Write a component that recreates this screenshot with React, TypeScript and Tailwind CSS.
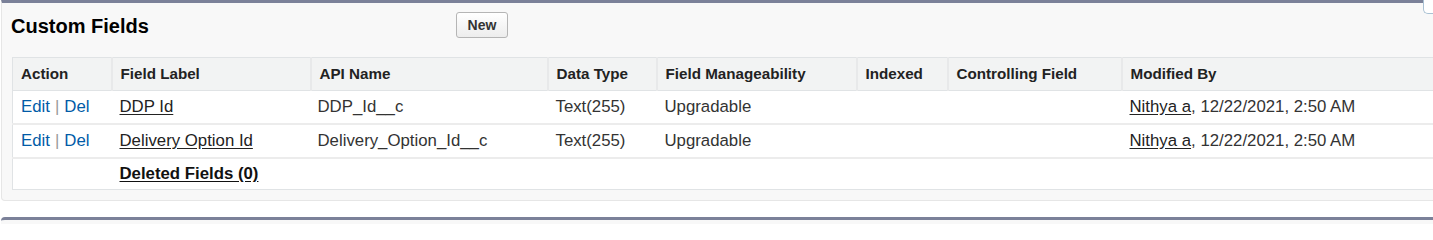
import React from 'react';

type Field = {
  label: string;
  api: string;
  type: string;
  manage: string;
};

const fields: Field[] = [
  { label: 'DDP Id', api: 'DDP_Id__c', type: 'Text(255)', manage: 'Upgradable' },
  { label: 'Delivery Option Id', api: 'Delivery_Option_Id__c', type: 'Text(255)', manage: 'Upgradable' },
];

const cols = [
  { title: 'Action', w: 'w-[99px]' },
  { title: 'Field Label', w: 'w-[199px]' },
  { title: 'API Name', w: 'w-[237px]' },
  { title: 'Data Type', w: 'w-[109px]' },
  { title: 'Field Manageability', w: 'w-[200px]' },
  { title: 'Indexed', w: 'w-[91px]' },
  { title: 'Controlling Field', w: 'w-[174px]' },
  { title: 'Modified By', w: 'w-[330px]' },
];

export default function App() {
  return (
    <div className="h-[224px] w-[1433px] overflow-hidden bg-white font-['Liberation_Sans',Arial,sans-serif] text-[#333]">
      {/* Custom Fields related list */}
      <div className="relative ml-px h-[201px] w-[1460px] rounded-b-[4px] border-x border-b border-t-[3px] border-[#e6e6e6] border-t-[#7b8199] bg-[#f8f8f8]">
        <div className="absolute right-[25px] top-[-3px] h-[14px] w-[12px] rounded-bl-[5px] border-b border-l border-[#a9c1d3] bg-white" />

        <div className="flex h-[54px] items-start">
          <h3 className="w-[454px] pl-[9px] pt-[11px] text-[20px] font-bold leading-[24px] text-black">Custom Fields</h3>
          <button className="mt-[9px] h-[26px] w-[52px] rounded-[3px] border border-[#b5b5b5] bg-gradient-to-b from-white to-[#ededed] text-[14px] font-bold text-[#333]">
            New
          </button>
        </div>

        <table className="ml-[10px] border-collapse border border-[#e0e3e5] bg-white">
          <thead>
            <tr className="h-[33px] bg-[#f2f3f3]">
              {cols.map((c, i) => (
                <th
                  key={c.title}
                  className={`${c.w} border-b border-[#e0e3e5] pl-[8px] text-left align-middle text-[15.2px] font-bold text-[#222] ${
                    i > 0 ? 'border-l-2 border-l-[#e8e9ea]' : ''
                  }`}
                >
                  {c.title}
                </th>
              ))}
            </tr>
          </thead>
          <tbody className="text-[16.8px] text-[#333]">
            {fields.map((f, i) => (
              <tr key={f.api} className={`border-b-2 border-[#ececec] ${i === 0 ? 'h-[33px]' : 'h-[34px]'}`}>
                <td className="pl-[8px]">
                  <a className="text-[#015ba7]">Edit</a>
                  <span className="px-[5px] text-[#999]">|</span>
                  <a className="text-[#015ba7]">Del</a>
                </td>
                <td className="pl-[8px]">
                  <a className="text-[#222] underline underline-offset-2">{f.label}</a>
                </td>
                <td className="pl-[7px]">{f.api}</td>
                <td className="pl-[8px]">{f.type}</td>
                <td className="pl-[8px]">{f.manage}</td>
                <td />
                <td />
                <td className="pl-[8px]">
                  <a className="text-[#222] underline underline-offset-2">Nithya a</a>, 12/22/2021, 2:50 AM
                </td>
              </tr>
            ))}
            <tr className="h-[32px]">
              <td />
              <td colSpan={7} className="pl-[8px]">
                <a className="font-bold text-[#111] underline underline-offset-2">Deleted Fields (0)</a>
              </td>
            </tr>
          </tbody>
        </table>
      </div>

      {/* next related list */}
      <div className="ml-px mt-[16px] h-[20px] w-[1460px] rounded-t-[4px] border-t-[3px] border-[#7b8199] bg-[#f8f8f8]" />
    </div>
  );
}
